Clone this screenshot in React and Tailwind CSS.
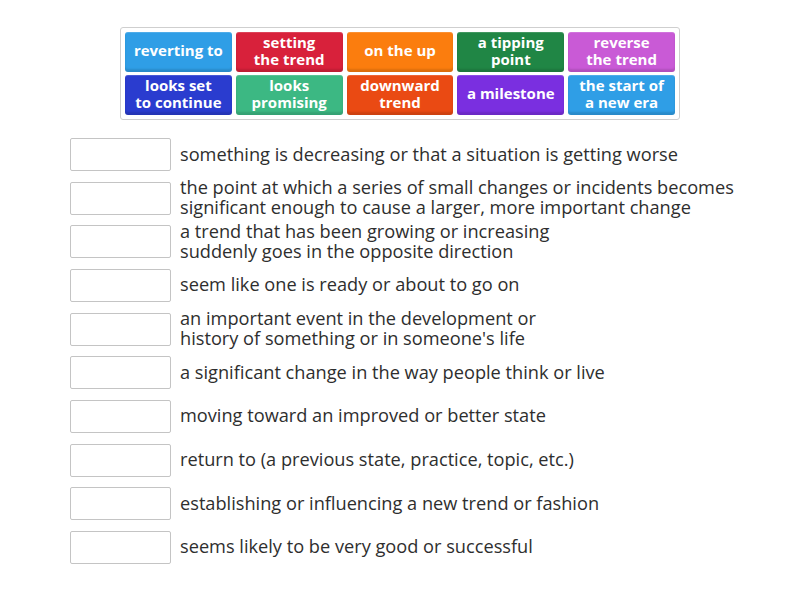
import React from "react";

const tiles = [
  { t: ["reverting to"], c: "bg-[#2f9ee6]" },
  { t: ["setting", "the trend"], c: "bg-[#d8213b]" },
  { t: ["on the up"], c: "bg-[#fb7d0e]" },
  { t: ["a tipping", "point"], c: "bg-[#208645]" },
  { t: ["reverse", "the trend"], c: "bg-[#c95ad6]" },
  { t: ["looks set", "to continue"], c: "bg-[#2a3ccf]" },
  { t: ["looks", "promising"], c: "bg-[#3cb883]" },
  { t: ["downward", "trend"], c: "bg-[#ea4a13]" },
  { t: ["a milestone"], c: "bg-[#7a2fe0]" },
  { t: ["the start of", "a new era"], c: "bg-[#2f9ee6]" },
];

const rows = [
  ["something is decreasing or that a situation is getting worse"],
  [
    "the point at which a series of small changes or incidents becomes",
    "significant enough to cause a larger, more important change",
  ],
  ["a trend that has been growing or increasing", "suddenly goes in the opposite direction"],
  ["seem like one is ready or about to go on"],
  ["an important event in the development or", "history of something or in someone's life"],
  ["a significant change in the way people think or live"],
  ["moving toward an improved or better state"],
  ["return to (a previous state, practice, topic, etc.)"],
  ["establishing or influencing a new trend or fashion"],
  ["seems likely to be very good or successful"],
];

export default function App() {
  return (
    <div
      className="w-[800px] h-[600px] bg-white relative"
      style={{ fontFamily: '"Open Sans", sans-serif' }}
    >
      <div className="pt-[27px] pl-[120px]">
        <div className="w-[560px] h-[93px] border border-[#cfcfcf] rounded-[3px] p-[4px] grid grid-cols-5 gap-x-[4px] gap-y-[3px]">
          {tiles.map((tile, i) => (
            <div
              key={i}
              className={`${tile.c} h-[40px] pb-[3px] rounded-[3px] flex flex-col items-center justify-center text-white font-bold text-[15px] leading-[17px] text-center shadow-[inset_0_-3px_2px_rgba(0,0,0,0.12),inset_0_1px_0_rgba(255,255,255,0.15)]`}
            >
              {tile.t.map((l, j) => (
                <span key={j} className="whitespace-nowrap">{l}</span>
              ))}
            </div>
          ))}
        </div>
      </div>
      <div className="pl-[70px] pt-[18px] flex flex-col">
        {rows.map((r, i) => (
          <div key={i} className="h-[43.67px] flex items-start">
            <div className="w-[101px] h-[33px] border border-[#c4c4c4] rounded-[2px] bg-white shrink-0" />
            <div className="ml-[9px] h-[33px] pb-[2px] flex flex-col justify-center text-[18.2px] leading-[20px] text-[#2e2e2e]">
              {r.map((l, j) => (
                <span key={j} className="whitespace-nowrap">{l}</span>
              ))}
            </div>
          </div>
        ))}
      </div>
    </div>
  );
}
